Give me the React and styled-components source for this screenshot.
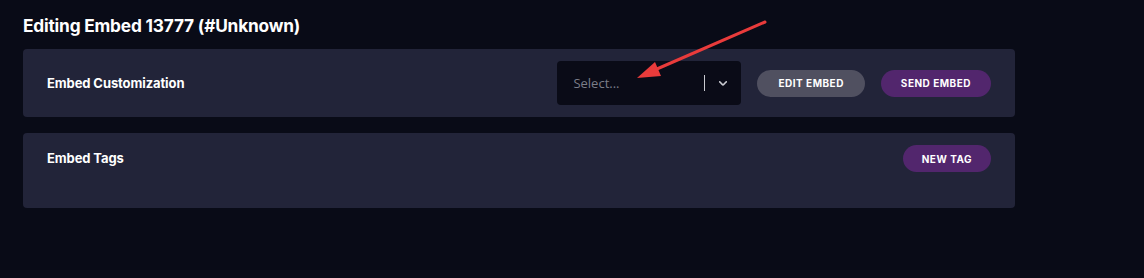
import styled, { createGlobalStyle } from 'styled-components';

const GlobalStyle = createGlobalStyle`
  html, body {
    margin: 0;
    padding: 0;
    background-color: #090b17;
  }
  body {
    font-family: Inter, "Liberation Sans", sans-serif;
  }
`;

const Page = styled.div`
  position: relative;
  width: 1144px;
  height: 278px;
  padding: 15px 129px 0 23px;
  box-sizing: border-box;
  background-color: #090b17;
  color: #ffffff;
`;

const Title = styled.h1`
  margin: 0 0 12px;
  font-size: 17.3px;
  font-weight: 700;
  line-height: 22px;
  letter-spacing: -0.2px;
`;

const Card = styled.div`
  background-color: #222439;
  border-radius: 4px;
  padding: ${(p) => p.$padding};
  height: ${(p) => p.$height}px;
  box-sizing: border-box;
  display: flex;
  align-items: ${(p) => p.$align || 'center'};
  justify-content: space-between;
  margin-bottom: 16px;
`;

const CardTitle = styled.h2`
  margin: 0;
  font-size: 13px;
  font-weight: 700;
  letter-spacing: -0.1px;
  line-height: 27px;
`;

const Actions = styled.div`
  display: flex;
  align-items: center;
  gap: 16px;
`;

const SelectBox = styled.div`
  width: 184px;
  height: 44px;
  box-sizing: border-box;
  background-color: #0a0b17;
  border-radius: 4px;
  display: flex;
  align-items: center;
  padding-left: 16px;
`;

const Placeholder = styled.span`
  flex: 1;
  font-family: "Open Sans", "Liberation Sans", sans-serif;
  font-size: 13px;
  color: #7b7d88;
`;

const Separator = styled.span`
  width: 1px;
  height: 16px;
  background-color: #c9cad0;
`;

const Chevron = styled.span`
  width: 36px;
  display: flex;
  align-items: center;
  justify-content: center;
  color: #c9cad0;
`;

const Button = styled.button`
  height: 27px;
  padding: 0 ${(p) => p.$pad || 21}px;
  border: none;
  border-radius: 14px;
  background-color: ${(p) => (p.$variant === 'gray' ? '#505060' : '#52266d')};
  color: #ffffff;
  font-family: Inter, "Liberation Sans", sans-serif;
  font-size: 10px;
  font-weight: 700;
  letter-spacing: 0.5px;
  text-transform: uppercase;
  cursor: pointer;
`;

const ArrowOverlay = styled.svg`
  position: absolute;
  left: 0;
  top: 0;
  pointer-events: none;
`;

export default function App() {
  return (
    <>
      <GlobalStyle />
      <Page>
        <Title>Editing Embed 13777 (#Unknown)</Title>
        <Card $height={68} $padding="0 24px">
          <CardTitle>Embed Customization</CardTitle>
          <Actions>
            <SelectBox>
              <Placeholder>Select...</Placeholder>
              <Separator />
              <Chevron>
                <svg width="14" height="14" viewBox="0 0 20 20" fill="currentColor">
                  <path d="M4.516 7.548c0.436-0.446 1.043-0.481 1.576 0l3.908 3.747 3.908-3.747c0.533-0.481 1.141-0.446 1.574 0 0.436 0.445 0.408 1.197 0 1.615-0.406 0.418-4.695 4.502-4.695 4.502-0.217 0.223-0.502 0.335-0.787 0.335s-0.57-0.112-0.789-0.335c0 0-4.287-4.084-4.695-4.502s-0.436-1.17 0-1.615z" />
                </svg>
              </Chevron>
            </SelectBox>
            <Button $variant="gray">Edit Embed</Button>
            <Button $pad={20}>Send Embed</Button>
          </Actions>
        </Card>
        <Card $height={75} $padding="12px 24px" $align="flex-start">
          <CardTitle>Embed Tags</CardTitle>
          <Button $pad={19}>New Tag</Button>
        </Card>
        <ArrowOverlay width="1144" height="278">
          <line x1="765" y1="22" x2="650" y2="72" stroke="#e93b3b" strokeWidth="3" strokeLinecap="round" />
          <polygon points="637,78 655,62 661,76" fill="#e93b3b" />
        </ArrowOverlay>
      </Page>
    </>
  );
}
